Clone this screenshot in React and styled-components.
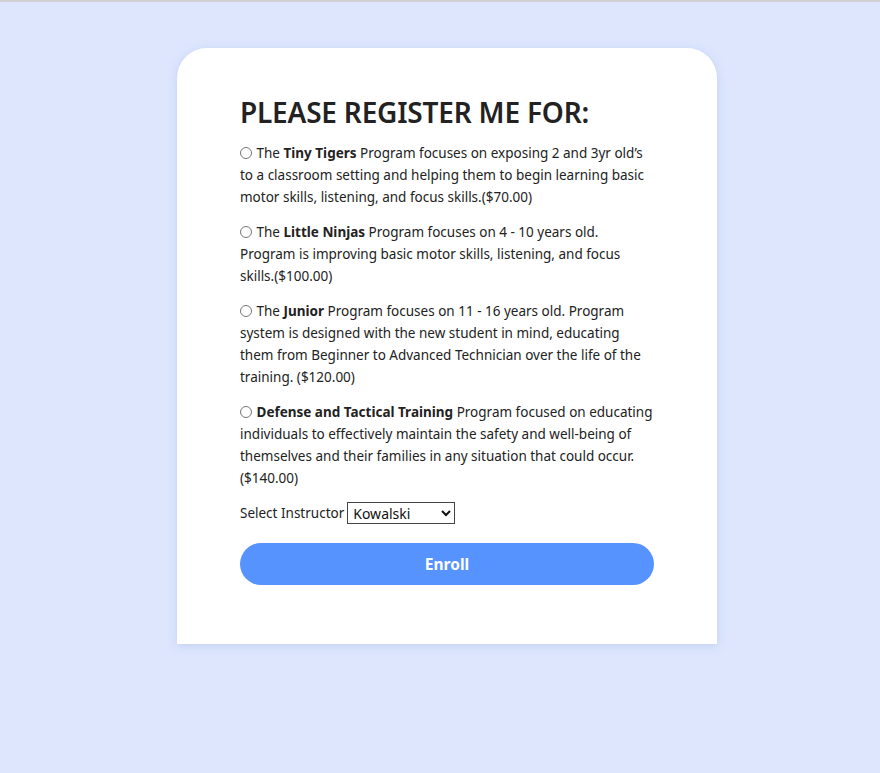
import React from "react";
import styled, { createGlobalStyle } from "styled-components";

const Global = createGlobalStyle`
  html, body { margin: 0; padding: 0; }
  body {
    background: #dde6fd;
    font-family: "Noto Sans", "Open Sans", sans-serif;
    color: #222;
    min-height: 773px;
    border-top: 2px solid #cfcfd4;
    box-sizing: border-box;
  }
`;

const Page = styled.main`
  display: flex;
  justify-content: center;
  padding: 46px 0 60px 14px;
`;

const Card = styled.form`
  width: 540px;
  box-sizing: border-box;
  background: #fff;
  border-radius: 30px 30px 0 0;
  box-shadow: 0 2px 10px rgba(150, 170, 220, 0.35);
  padding: 40px 63px 59px;
`;

const Title = styled.h1`
  margin: 0 0 6px;
  font-size: 28px;
  font-weight: 600;
  line-height: 48px;
  color: #222;
  letter-spacing: -0.2px;
`;

const Option = styled.p`
  margin: 0 0 13px;
  font-size: 13.5px;
  line-height: 22px;
  color: #222;
`;

const Radio = styled.input.attrs({ type: "radio" })`
  width: 12px;
  height: 12px;
  margin: 0 1px 0 0;
  vertical-align: -1px;
`;

const InstructorRow = styled.label`
  display: flex;
  align-items: center;
  gap: 3px;
  font-size: 13.5px;
  margin-top: 3px;
`;

const Select = styled.select`
  width: 108px;
  height: 22px;
  font-family: inherit;
  font-size: 14px;
  border: 1px solid #444;
  border-radius: 0;
  padding: 0 1px;
  background: #fff;
  color: #111;
`;

const Enroll = styled.button`
  display: block;
  width: 100%;
  height: 42px;
  margin-top: 19px;
  border: none;
  border-radius: 21px;
  background: #5793ff;
  color: #fff;
  font-family: inherit;
  font-size: 15.5px;
  font-weight: 700;
  cursor: pointer;
`;

export default function App() {
  return (
    <>
      <Global />
      <Page>
        <Card onSubmit={(e) => e.preventDefault()}>
          <Title>PLEASE REGISTER ME FOR:</Title>
          <Option>
            <Radio name="program" /> The <b>Tiny Tigers</b> Program focuses on exposing 2 and 3yr old’s to a classroom setting and helping them to begin learning basic motor skills, listening, and focus skills.($70.00)
          </Option>
          <Option>
            <Radio name="program" /> The <b>Little Ninjas</b> Program focuses on 4 - 10 years old. Program is improving basic motor skills, listening, and focus skills.($100.00)
          </Option>
          <Option>
            <Radio name="program" /> The <b>Junior</b> Program focuses on 11 - 16 years old. Program system is designed with the new student in mind, educating them from Beginner to Advanced Technician over the life of the training. ($120.00)
          </Option>
          <Option>
            <Radio name="program" /> <b>Defense and Tactical Training</b> Program focused on educating individuals to effectively maintain the safety and well-being of themselves and their families in any situation that could occur. ($140.00)
          </Option>
          <InstructorRow>
            Select Instructor
            <Select defaultValue="Kowalski">
              <option>Kowalski</option>
              <option>Smith</option>
            </Select>
          </InstructorRow>
          <Enroll type="submit">Enroll</Enroll>
        </Card>
      </Page>
    </>
  );
}
